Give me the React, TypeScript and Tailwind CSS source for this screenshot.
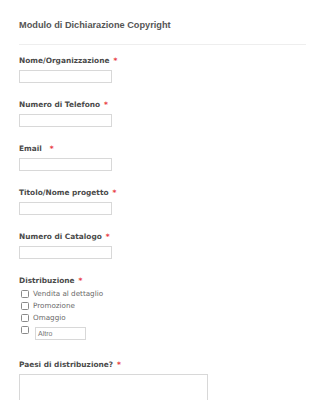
import React from "react";

const labelCls =
  "h-[10px] leading-[10px] text-[7.4px] font-bold text-[#4a4a4a] font-['DejaVu_Sans',sans-serif] whitespace-nowrap";

function Label({ text, gap = "ml-[4px]" }: { text: string; gap?: string }) {
  return (
    <div className={labelCls}>
      {text}
      <span className={`${gap} text-[#e8383d]`}>*</span>
    </div>
  );
}

function Field({ text, gap, first }: { text: string; gap?: string; first?: boolean }) {
  return (
    <div className={first ? "mt-[11px]" : "mt-[17px]"}>
      <Label text={text} gap={gap} />
      <div className="mt-[4px] h-[13px] w-[93px] border border-[#d8d8d8] bg-white" />
    </div>
  );
}

function Check() {
  return <div className="h-[8px] w-[8px] rounded-[1.5px] border border-[#8a8a8a] bg-white shrink-0" />;
}

export default function App() {
  const optCls =
    "flex items-center h-[12px] gap-[4px] pl-[2px] text-[7.2px] text-[#6a6a6a] font-['DejaVu_Sans',sans-serif] whitespace-nowrap";
  return (
    <div className="w-[325px] h-[400px] overflow-hidden bg-white pl-[19px]">
      <div className="pt-[19px] h-[31px] leading-[12px] text-[9.2px] font-bold text-[#555] font-['Liberation_Sans',sans-serif]">
        Modulo di Dichiarazione Copyright
      </div>
      <div className="mt-[13px] w-[287px] border-t border-[#eeeeee]" />
      <Field text="Nome/Organizzazione" first />
      <Field text="Numero di Telefono" />
      <Field text="Email" gap="ml-[8px]" />
      <Field text="Titolo/Nome progetto" />
      <Field text="Numero di Catalogo" />
      <div className="mt-[17px]">
        <Label text="Distribuzione" />
        <div className="mt-[2px] flex flex-col">
          <div className={optCls}>
            <Check />
            <span>Vendita al dettaglio</span>
          </div>
          <div className={optCls}>
            <Check />
            <span>Promozione</span>
          </div>
          <div className={optCls}>
            <Check />
            <span>Omaggio</span>
          </div>
          <div className="mt-[2px] flex items-start pl-[2px] gap-[6px]">
            <div className="mt-[0px]">
              <Check />
            </div>
            <div className="mt-[1px] h-[13px] w-[51px] border border-[#d8d8d8] bg-white pl-[2px] leading-[11px] text-[7px] text-[#777] font-['Liberation_Sans',sans-serif]">
              Altro
            </div>
          </div>
        </div>
      </div>
      <div className="mt-[20px]">
        <Label text="Paesi di distribuzione?" />
        <div className="mt-[4px] h-[60px] w-[189px] border border-[#d8d8d8] bg-white" />
      </div>
    </div>
  );
}
